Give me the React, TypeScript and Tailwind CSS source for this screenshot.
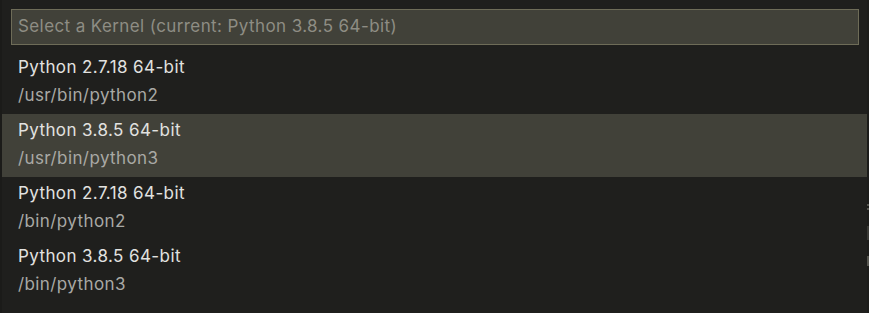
import React from 'react';

const kernels = [
  { name: 'Python 2.7.18 64-bit', path: '/usr/bin/python2', selected: false },
  { name: 'Python 3.8.5 64-bit', path: '/usr/bin/python3', selected: true },
  { name: 'Python 2.7.18 64-bit', path: '/bin/python2', selected: false },
  { name: 'Python 3.8.5 64-bit', path: '/bin/python3', selected: false },
];

export default function App() {
  return (
    <div
      className="flex w-[869px] h-[313px] overflow-hidden bg-[#1f1f1d]"
      style={{ fontFamily: 'Inter, "Noto Sans", sans-serif' }}
    >
      <div className="w-[2px] bg-[#1b1b19]" />
      <div className="flex flex-col w-[865px] pt-[9px]">
        <div className="ml-[9px] mr-[8px] h-[36px] flex items-center px-[6px] bg-[#414139] border border-[#6e6c58]">
          <span className="text-[17px] text-[#8e8d84] tracking-[0.4px]">
            Select a Kernel (current: Python 3.8.5 64-bit)
          </span>
        </div>
        <div className="mt-[6px] flex flex-col">
          {kernels.map((k, i) => (
            <div
              key={i}
              className={`h-[63px] pl-[16px] pt-[2px] ${k.selected ? 'bg-[#414139]' : ''}`}
            >
              <div className="leading-[28px] text-[17px] text-[#e2e2e0] tracking-[0.4px]">{k.name}</div>
              <div className="leading-[28px] text-[17px] text-[#a9a9a5] tracking-[0.4px]">{k.path}</div>
            </div>
          ))}
        </div>
      </div>
      <div className="flex-1 flex flex-col bg-[#1c1c1a] pt-[204px] gap-[2px]">
        <div className="h-[2px] bg-[#55554f]" />
        <div className="h-[2px] bg-[#55554f]" />
        <div className="mt-[14px] h-[14px] bg-[#3a3a36]" />
        <div className="mt-[14px] h-[10px] bg-[#55554f]" />
      </div>
    </div>
  );
}
